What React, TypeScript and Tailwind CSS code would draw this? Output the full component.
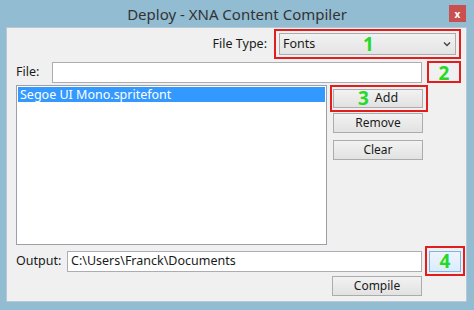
import React from "react";

const font = { fontFamily: '"Noto Sans", "Open Sans", sans-serif' };

function Btn({ children, className = "" }: { children: React.ReactNode; className?: string }) {
  return (
    <div
      className={
        "flex items-center justify-center border border-[#acacac] bg-gradient-to-b from-[#f2f2f2] to-[#e2e2e2] text-[12px] text-[#1a1a1a] " +
        className
      }
    >
      {children}
    </div>
  );
}

function Digit({ n }: { n: string }) {
  return (
    <span className="text-[19px] font-bold leading-none text-[#27d927]">{n}</span>
  );
}

export default function App() {
  return (
    <div className="w-[474px] h-[310px] bg-[#92bcd2] flex flex-col" style={font}>
      {/* Title bar */}
      <div className="h-[27px] grid grid-cols-[1fr_auto_1fr] items-center">
        <div />
        <div className="text-[15px] text-[#333] pt-[1px]">Deploy - XNA Content Compiler</div>
        <div className="flex justify-end pr-[8px]">
          <div className="w-[17px] h-[17px] bg-[#c9504f] flex items-center justify-center text-white text-[10px] font-bold leading-none">
            x
          </div>
        </div>
      </div>

      {/* Client area */}
      <div className="ml-[6px] mr-[7px] h-[275px] bg-[#f0f0f0] border border-[#b7c8d3] flex flex-col text-[12px] text-[#1a1a1a]">
        {/* Row 1 */}
        <div className="flex items-center justify-end mt-[1px] pr-[5px]">
          <span className="mr-[7px] text-[12.5px]">File Type:</span>
          <div className="w-[187px] h-[30px] border-2 border-[#e11d1d] flex items-center justify-center">
            <div className="w-[177px] h-[22px] border border-[#acacac] bg-gradient-to-b from-[#f2f2f2] to-[#e4e4e4] flex items-center pl-[3px] pr-[4px]">
              <span className="w-[80px] text-[12.5px]">Fonts</span>
              <Digit n="1" />
              <div className="flex-1" />
              <svg width="8" height="6" viewBox="0 0 8 6">
                <path d="M1 1.5 L4 4.5 L7 1.5" stroke="#444" strokeWidth="1.4" fill="none" />
              </svg>
            </div>
          </div>
        </div>

        {/* Row 2 */}
        <div className="flex items-center mt-[2px] h-[22px]">
          <span className="ml-[9px] w-[36px] text-[12.5px]">File:</span>
          <div className="w-[370px] h-[21px] bg-white border border-[#abadb3]" />
          <div className="ml-[5px] w-[34px] h-[22px] border-2 border-[#e11d1d] flex items-center justify-center pt-[2px]">
            <Digit n="2" />
          </div>
        </div>

        {/* Row 3 */}
        <div className="flex mt-[2px]">
          <div className="ml-[9px] w-[311px] h-[160px] bg-white border border-[#9aa0a6] p-[1px]">
            <div className="h-[15px] bg-[#3399ff] text-white text-[12.5px] leading-[15px] pl-[2px]">
              Segoe UI Mono.spritefont
            </div>
          </div>
          <div className="ml-[3px] flex flex-col">
            <div className="w-[98px] h-[27px] border-2 border-[#e11d1d] flex items-center pl-[1px]">
              <Btn className="w-[90px] h-[19px] gap-[6px]">
                <Digit n="3" />
                <span className="text-[12.5px]">Add</span>
              </Btn>
            </div>
            <Btn className="ml-[3px] mt-[1px] w-[90px] h-[20px] text-[12.5px]">Remove</Btn>
            <Btn className="ml-[3px] mt-[7px] w-[90px] h-[20px] text-[12.5px]">Clear</Btn>
          </div>
        </div>

        {/* Row 4 */}
        <div className="flex items-center mt-[1px]">
          <span className="ml-[9px] w-[51px] text-[12.5px]">Output:</span>
          <div className="w-[355px] h-[21px] bg-white border border-[#abadb3] flex items-center pl-[3px] text-[12.5px]">
            C:\Users\Franck\Documents
          </div>
          <div className="ml-[3px] w-[40px] h-[30px] border-2 border-[#e11d1d] flex items-center justify-center">
            <div className="w-[32px] h-[21px] border border-[#7eb4ea] bg-gradient-to-b from-[#ecf4fc] to-[#dcecfc] flex items-center justify-center">
              <Digit n="4" />
            </div>
          </div>
        </div>

        {/* Row 5 */}
        <div className="flex mt-[0px]">
          <Btn className="ml-[325px] w-[90px] h-[20px] text-[12.5px]">Compile</Btn>
        </div>
      </div>
    </div>
  );
}
